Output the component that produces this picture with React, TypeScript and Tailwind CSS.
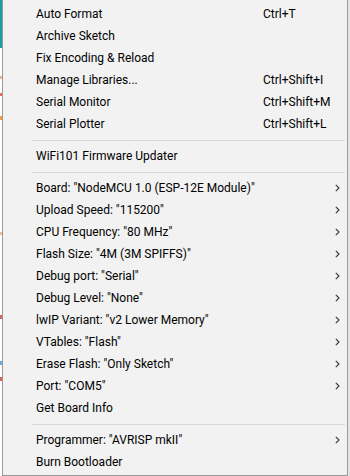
import React from "react";

type Item = {
  label: string;
  shortcut?: string;
  sub?: boolean;
};

const groups: Item[][] = [
  [
    { label: "Auto Format", shortcut: "Ctrl+T" },
    { label: "Archive Sketch" },
    { label: "Fix Encoding & Reload" },
    { label: "Manage Libraries...", shortcut: "Ctrl+Shift+I" },
    { label: "Serial Monitor", shortcut: "Ctrl+Shift+M" },
    { label: "Serial Plotter", shortcut: "Ctrl+Shift+L" },
  ],
  [{ label: "WiFi101 Firmware Updater" }],
  [
    { label: 'Board: "NodeMCU 1.0 (ESP-12E Module)"', sub: true },
    { label: 'Upload Speed: "115200"', sub: true },
    { label: 'CPU Frequency: "80 MHz"', sub: true },
    { label: 'Flash Size: "4M (3M SPIFFS)"', sub: true },
    { label: 'Debug port: "Serial"', sub: true },
    { label: 'Debug Level: "None"', sub: true },
    { label: 'lwIP Variant: "v2 Lower Memory"', sub: true },
    { label: 'VTables: "Flash"', sub: true },
    { label: 'Erase Flash: "Only Sketch"', sub: true },
    { label: 'Port: "COM5"', sub: true },
    { label: "Get Board Info" },
  ],
  [
    { label: 'Programmer: "AVRISP mkII"', sub: true },
    { label: "Burn Bootloader" },
  ],
];

const Chevron = () => (
  <svg width="5" height="8" viewBox="0 0 5 8" className="text-[#333]">
    <path d="M0.8 0.8 L4 4 L0.8 7.2" fill="none" stroke="currentColor" strokeWidth="1.1" />
  </svg>
);

const Row = ({ item }: { item: Item }) => (
  <div className="flex h-[22px] items-center text-[12px] text-black">
    <span className="w-[260px] shrink-0 pl-[33px] whitespace-nowrap">{item.label}</span>
    <span className="flex-1 whitespace-nowrap">{item.shortcut}</span>
    <span className="flex w-[12px] shrink-0 justify-start">{item.sub && <Chevron />}</span>
  </div>
);

export default function App() {
  return (
    <div
      className="flex h-[476px] w-[350px] overflow-hidden bg-white"
      style={{ fontFamily: 'Roboto, "Noto Sans", sans-serif' }}
    >
      <div className="flex w-[2px] shrink-0 flex-col">
        <div className="h-[48px] bg-[#1b9fa3]"></div>
        <div className="h-[28px] bg-white"></div>
        <div className="h-[3px] bg-[#e8b898]"></div>
        <div className="h-[14px] bg-white"></div>
        <div className="h-[3px] bg-[#e07070]"></div>
        <div className="h-[20px] bg-white"></div>
        <div className="h-[4px] bg-[#f0a040]"></div>
        <div className="h-[112px] bg-white"></div>
        <div className="h-[3px] bg-[#e8c0a0]"></div>
        <div className="h-[80px] bg-white"></div>
        <div className="h-[4px] bg-[#e06060]"></div>
        <div className="h-[42px] bg-white"></div>
        <div className="h-[4px] bg-[#70a8e0]"></div>
        <div className="h-[12px] bg-white"></div>
        <div className="h-[4px] bg-[#e06050]"></div>
        <div className="flex-1 bg-white"></div>
      </div>
      <div className="flex h-full w-[346px] shrink-0 flex-col border-r border-b border-l border-[#9a9a9a] bg-[#f2f2f2] pt-[3px]">
        {groups.map((g, i) => (
          <div key={i}>
            {i > 0 && (
              <div className="flex h-[10px] items-center pl-[29px] pr-[2px]">
                <div className="h-px w-full bg-[#d7d7d7]"></div>
              </div>
            )}
            {g.map((item) => (
              <Row key={item.label} item={item} />
            ))}
          </div>
        ))}
      </div>
      <div className="w-[2px] shrink-0 bg-[#e4e4e4]"></div>
    </div>
  );
}
